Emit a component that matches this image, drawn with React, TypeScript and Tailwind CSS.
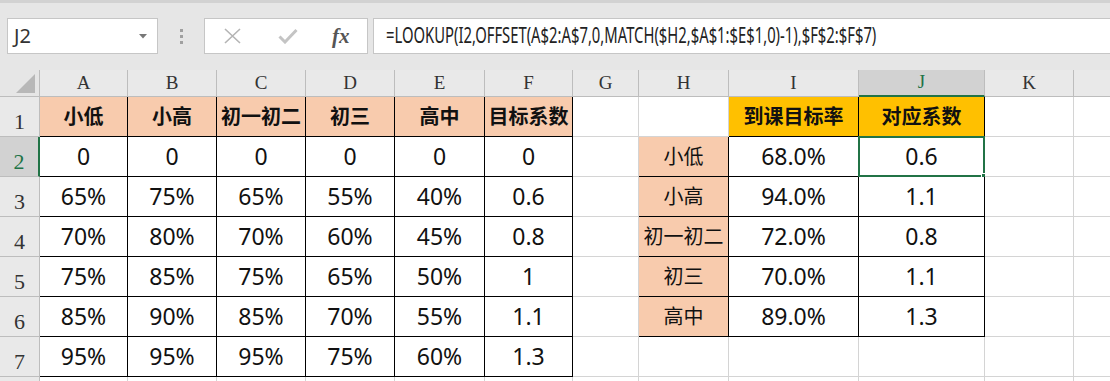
import React from 'react';

const COLS = ['A', 'B', 'C', 'D', 'E', 'F', 'G', 'H', 'I', 'J', 'K', ''];

const levels = ['小低', '小高', '初一初二', '初三', '高中'];

const thresholds = [
  ['0', '0', '0', '0', '0', '0'],
  ['65%', '75%', '65%', '55%', '40%', '0.6'],
  ['70%', '80%', '70%', '60%', '45%', '0.8'],
  ['75%', '85%', '75%', '65%', '50%', '1'],
  ['85%', '90%', '85%', '70%', '55%', '1.1'],
  ['95%', '95%', '95%', '75%', '60%', '1.3'],
];

const results = [
  ['小低', '68.0%', '0.6'],
  ['小高', '94.0%', '1.1'],
  ['初一初二', '72.0%', '0.8'],
  ['初三', '70.0%', '1.1'],
  ['高中', '89.0%', '1.3'],
];

const cellFont = "font-['Noto_Sans','Noto_Sans_CJK_SC',sans-serif]";

type CellProps = {
  children?: React.ReactNode;
  fill?: string;
  dark?: boolean;
  bold?: boolean;
  label?: boolean;
  selected?: boolean;
};

const Cell: React.FC<CellProps> = ({ children, fill = 'bg-white', dark, bold, label, selected }) => (
  <div
    className={`relative flex items-center justify-center border-r border-b ${fill} ${
      dark ? 'border-black' : 'border-[#d4d4d4]'
    } ${bold ? 'font-bold text-[20px]' : label ? 'text-[20px]' : 'text-[23px]'} ${cellFont} text-[#111] whitespace-nowrap`}
  >
    {children}
    {selected && (
      <>
        <div className="absolute -left-px -top-px -right-px -bottom-px border-2 border-[#217346]" />
        <div className="absolute -right-[4px] -bottom-[4px] w-[7px] h-[7px] bg-[#217346] border border-white" />
      </>
    )}
  </div>
);

const Toolbar: React.FC = () => (
  <div className="h-[70px] bg-[#e6e6e6] border-t-[3px] border-[#d2d2d2] flex items-start pt-[15px] pl-[7px]">
    <div className="w-[151px] h-[36px] bg-white border border-[#c6c6c6] flex items-center justify-between pl-[6px] pr-[10px]">
      <span className="font-['Noto_Sans',sans-serif] text-[20px] text-[#333]">J2</span>
      <svg width="8" height="5" viewBox="0 0 8 5">
        <path d="M0 0 L8 0 L4 4.5 Z" fill="#777" />
      </svg>
    </div>
    <div className="w-[46px] h-[36px] flex flex-col items-center justify-center gap-[3px]">
      <div className="w-[3px] h-[3px] bg-[#a0a0a0]" />
      <div className="w-[3px] h-[3px] bg-[#a0a0a0]" />
      <div className="w-[3px] h-[3px] bg-[#a0a0a0]" />
    </div>
    <div className="w-[164px] h-[36px] bg-white border border-[#c6c6c6] flex items-center">
      <svg className="ml-[19px]" width="17" height="16" viewBox="0 0 17 16">
        <path d="M1 1 L16 15 M16 1 L1 15" stroke="#b4b4b4" strokeWidth="1.6" fill="none" />
      </svg>
      <svg className="ml-[37px]" width="20" height="16" viewBox="0 0 20 16">
        <path d="M1.5 8.5 L7 14 L18.5 2" stroke="#c4c4c4" strokeWidth="3" fill="none" />
      </svg>
      <span className="ml-[34px] font-['Liberation_Serif',serif] italic font-bold text-[21px] text-[#555] leading-none">
        fx
      </span>
    </div>
    <div className="ml-[5px] flex-1 mr-[-10px] h-[36px] bg-white border border-[#c6c6c6] flex items-center pl-[12px] overflow-hidden">
      {/* formula text is drawn in a narrow face, so squeeze it horizontally */}
      <span className="inline-block origin-left scale-x-[0.705] font-['Noto_Sans',sans-serif] text-[21px] text-[#222] whitespace-nowrap">
        =LOOKUP(I2,OFFSET(A$2:A$7,0,MATCH($H2,$A$1:$E$1,0)-1),$F$2:$F$7)
      </span>
    </div>
  </div>
);

const App: React.FC = () => {
  const rowCells = (r: number): React.ReactNode[] => {
    const out: React.ReactNode[] = [];
    if (r === 0) {
      levels.forEach((l) => (
        out.push(<Cell key={l} fill="bg-[#f8cbad]" dark bold>{l}</Cell>)
      ));
      out.push(<Cell key="F" fill="bg-[#f8cbad]" dark bold>目标系数</Cell>);
      out.push(<Cell key="G" />);
      out.push(<Cell key="H" />);
      out.push(<Cell key="I" fill="bg-[#ffc000]" dark bold>到课目标率</Cell>);
      out.push(<Cell key="J" fill="bg-[#ffc000]" dark bold>对应系数</Cell>);
    } else {
      thresholds[r - 1].forEach((v, i) => out.push(<Cell key={i} dark>{v}</Cell>));
      out.push(<Cell key="G" />);
      const res = results[r - 1];
      if (res) {
        out.push(<Cell key="H" fill="bg-[#f8cbad]" dark label>{res[0]}</Cell>);
        out.push(<Cell key="I" dark>{res[1]}</Cell>);
        out.push(<Cell key="J" dark selected={r === 1}>{res[2]}</Cell>);
      } else {
        out.push(<Cell key="H" />);
        out.push(<Cell key="I" />);
        out.push(<Cell key="J" />);
      }
    }
    out.push(<Cell key="K" />);
    out.push(<Cell key="L" />);
    return out;
  };

  return (
    <div className="w-[1110px] h-[381px] overflow-hidden bg-white">
      <Toolbar />
      <div className="grid grid-cols-[40px_88px_89px_89px_89px_90px_88px_66px_90px_130px_126px_89px_60px] grid-rows-[27px_repeat(8,40px)]">
        {/* corner select-all */}
        <div className="relative bg-[#e6e6e6] border-r border-b border-[#bdbdbd]">
          <svg className="absolute right-[4px] bottom-[3px]" width="19" height="19" viewBox="0 0 19 19">
            <path d="M19 0 L19 19 L0 19 Z" fill="#b8b8b8" />
          </svg>
        </div>
        {COLS.map((c, i) => (
          <div
            key={i}
            className={`flex items-end justify-center pb-[2px] border-r border-b font-['Liberation_Serif',serif] text-[19px] leading-none ${
              c === 'J'
                ? 'bg-[#d2d2d2] text-[#217346] border-r-[#bdbdbd] border-b-[#217346] border-b-2'
                : 'bg-[#e9e9e9] text-[#333] border-[#bdbdbd]'
            }`}
          >
            <span className="pb-[2px]">{c}</span>
          </div>
        ))}
        {Array.from({ length: 8 }).map((_, r) => (
          <React.Fragment key={r}>
            <div
              className={`flex items-end justify-center pb-[3px] border-b font-['Liberation_Serif',serif] text-[22px] leading-none ${
                r === 1
                  ? 'bg-[#d2d2d2] text-[#217346] border-r-2 border-r-[#217346] border-b-[#bdbdbd]'
                  : 'bg-[#e9e9e9] text-[#333] border-r border-[#bdbdbd]'
              }`}
            >
              {r < 7 ? r + 1 : ''}
            </div>
            {r < 7 ? rowCells(r) : COLS.map((_, i) => <Cell key={i} />)}
          </React.Fragment>
        ))}
      </div>
    </div>
  );
};

export default App;
